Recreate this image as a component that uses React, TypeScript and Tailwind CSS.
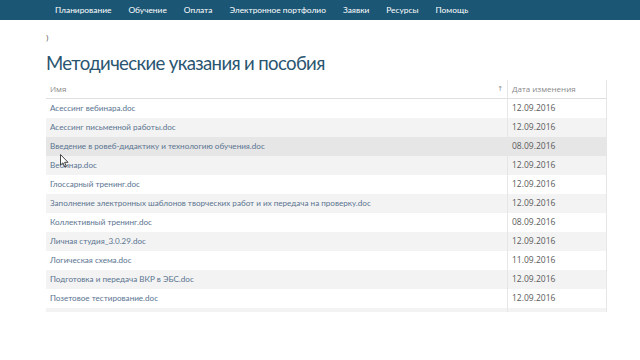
import React from "react";

const nav = ["Планирование", "Обучение", "Оплата", "Электронное портфолио", "Заявки", "Ресурсы", "Помощь"];

const rows: [string, string][] = [
  ["Асессинг вебинара.doc", "12.09.2016"],
  ["Асессинг письменной работы.doc", "12.09.2016"],
  ["Введение в ровеб-дидактику и технологию обучения.doc", "08.09.2016"],
  ["Вебинар.doc", "12.09.2016"],
  ["Глоссарный тренинг.doc", "12.09.2016"],
  ["Заполнение электронных шаблонов творческих работ и их передача на проверку.doc", "12.09.2016"],
  ["Коллективный тренинг.doc", "08.09.2016"],
  ["Личная студия_3.0.29.doc", "12.09.2016"],
  ["Логическая схема.doc", "11.09.2016"],
  ["Подготовка и передача ВКР в ЭБС.doc", "12.09.2016"],
  ["Позетовое тестирование.doc", "12.09.2016"],
  ["", ""],
];

export default function App() {
  return (
    <div className="w-[640px] h-[360px] bg-white overflow-hidden" style={{ fontFamily: '"Open Sans", "DejaVu Sans", sans-serif' }}>
      <div className="h-[20px] bg-[#1b5675] flex items-center pl-[55px] gap-[17px]" style={{ fontFamily: 'Lato, "Open Sans", sans-serif' }}>
        {nav.map((n) => (
          <span key={n} className="text-white text-[8.4px] leading-none">{n}</span>
        ))}
      </div>
      <div className="pl-[46px]">
        <div className="text-[8px] text-[#555] mt-[12px] leading-[10px]">)</div>
        <h1 className="text-[18.6px] leading-[24px] tracking-[-0.65px] text-[#2a5571] mt-[9px]" style={{ fontFamily: 'Lato, "Liberation Sans", sans-serif' }}>
          Методические указания и пособия
        </h1>
        <div className="w-[561px] mt-[5px] h-[232px] overflow-hidden border-r border-[#e6e6e6] relative">
          <div className="flex h-[19px] border-b border-[#e0e0e0] text-[8px] text-[#888] items-stretch">
            <div className="flex-1 flex items-center pl-[4px] pr-[4px] justify-between">
              <span>Имя</span>
              <span className="text-[7px]">↑</span>
            </div>
            <div className="w-[99px] flex items-center pl-[4px] border-l border-[#e6e6e6]">Дата изменения</div>
          </div>
          {rows.map(([name, date], i) => (
            <div
              key={i}
              className={`flex h-[19px] items-stretch ${i === 2 ? "bg-[#e6e6e6]" : i % 2 === 1 ? "bg-[#f3f3f3]" : "bg-white"}`}
            >
              <div className="flex-1 flex items-center pl-[4px] text-[8.1px] text-[#5a7491] whitespace-nowrap overflow-hidden" style={{ fontFamily: 'Lato, "Open Sans", sans-serif' }}>{name}</div>
              <div className="w-[99px] flex items-center pl-[4px] border-l border-[#e6e6e6] text-[8.5px] text-[#5a5a5a]">{date}</div>
            </div>
          ))}
          <svg className="absolute left-[14px] top-[74px]" width="9" height="14" viewBox="0 0 9 14">
            <path d="M0.5 0.5 L0.5 11 L3 8.8 L4.8 13 L6.3 12.3 L4.6 8.3 L8 8.3 Z" fill="white" stroke="#333" strokeWidth="0.9" strokeLinejoin="round" />
          </svg>
        </div>
      </div>
    </div>
  );
}
